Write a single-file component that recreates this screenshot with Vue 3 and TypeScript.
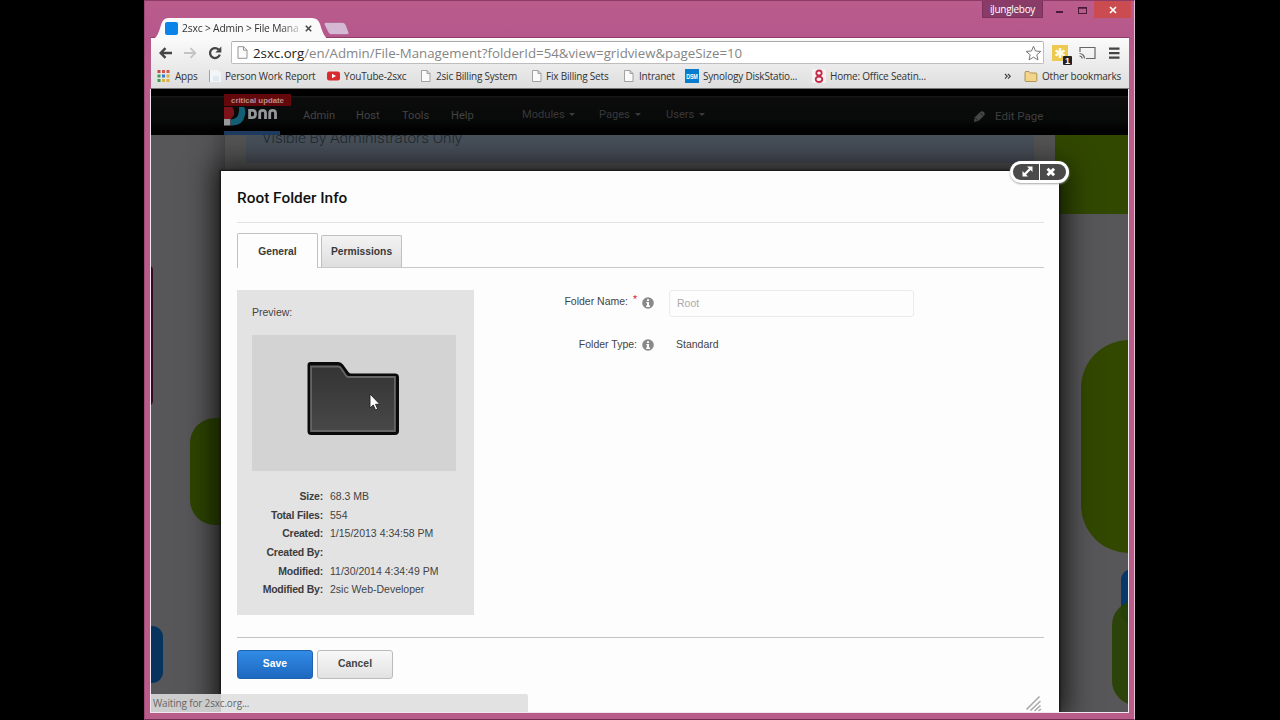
<script setup lang="ts">
interface Bookmark {
  label: string
  icon: 'apps' | 'report' | 'youtube' | 'page' | 'dsm' | 'seat' | 'more' | 'folder'
}

const bookmarks: Bookmark[] = [
  { label: 'Apps', icon: 'apps' },
  { label: 'Person Work Report', icon: 'report' },
  { label: 'YouTube-2sxc', icon: 'youtube' },
  { label: '2sic Billing System', icon: 'page' },
  { label: 'Fix Billing Sets', icon: 'page' },
  { label: 'Intranet', icon: 'page' },
  { label: 'Synology DiskStatio...', icon: 'dsm' },
  { label: 'Home: Office Seatin...', icon: 'seat' },
  { label: '', icon: 'more' },
  { label: 'Other bookmarks', icon: 'folder' },
]

const appColors = ['#c94b45', '#d0594a', '#d0594a', '#3f9a56', '#3b78c9', '#e0b13c', '#3f9a56', '#e0b13c', '#e0b13c']

const details: { label: string; value: string }[] = [
  { label: 'Size:', value: '68.3 MB' },
  { label: 'Total Files:', value: '554' },
  { label: 'Created:', value: '1/15/2013 4:34:58 PM' },
  { label: 'Created By:', value: '' },
  { label: 'Modified:', value: '11/30/2014 4:34:49 PM' },
  { label: 'Modified By:', value: '2sic Web-Developer' },
]
</script>

<template>
  <div class="desktop">
    <div class="window">
      <header class="titlebar">
        <div class="tabs">
          <svg class="tab-shape" width="190" height="22" viewBox="0 0 190 22">
            <path d="M0 22 C5 20 7 14 9 7 Q11 0 16 0 H160 Q166 0 168 6 C170 13 172 19 177 22 Z" fill="#fafafa" />
          </svg>
          <div class="tab-body">
            <span class="favicon"></span>
            <span class="tab-title">2sxc &gt; Admin &gt; File Mana</span>
            <svg width="7" height="7" viewBox="0 0 7 7"><path d="M.8.8 6.2 6.2M6.2.8.8 6.2" stroke="#444" stroke-width="1.5" /></svg>
          </div>
          <svg class="new-tab" width="27" height="13" viewBox="0 0 27 13">
            <path d="M2 .5 H20 Q22 .5 23 3 L26 11 Q26 12.500 24 12.500 H8 Q6 12.500 5 10 L1 2 Z" fill="#d5b8d3" stroke="#a5578c" stroke-width=".6" />
          </svg>
        </div>
        <div class="controls">
          <span class="user">iJungleboy</span>
          <svg class="win-btn" width="51" height="18" viewBox="0 0 51 18">
            <path d="M13 11h7" stroke="#4a1a38" stroke-width="2" />
            <rect x="35.500" y="6.500" width="8" height="6" fill="none" stroke="#4a1a38" />
            <path d="M35 7h9" stroke="#4a1a38" stroke-width="1.500" />
          </svg>
          <span class="close">
            <svg width="8" height="8" viewBox="0 0 8 8"><path d="M1 1 7 7M7 1 1 7" stroke="#fff" stroke-width="1.700" /></svg>
          </span>
        </div>
      </header>

      <div class="toolbar">
        <svg class="nav" width="80" height="26" viewBox="0 0 80 26">
          <path d="M21 13H10M14.500 8.200 9.700 13l4.800 4.800" fill="none" stroke="#444" stroke-width="2.400" />
          <path d="M33 13h11M39.500 8.200l4.800 4.800-4.800 4.800" fill="none" stroke="#c4c4c4" stroke-width="1.800" />
          <path d="M67.500 9.400A5 5 0 1 0 68.800 14.700" fill="none" stroke="#444" stroke-width="2.300" />
          <path d="M70.300 6.500v6h-6z" fill="#444" />
        </svg>
        <div class="omnibox">
          <svg width="11" height="13" viewBox="0 0 11 13"><path d="M1 .7h5.500L10 4.200v8.100H1zM6.500.7v3.500H10" fill="#fcfcfc" stroke="#888" stroke-width=".9" /></svg>
          <span class="url"><b>2sxc.org</b>/en/Admin/File-Management?folderId=54&amp;view=gridview&amp;pageSize=10</span>
          <svg width="17" height="16" viewBox="0 0 17 16"><path d="M8.500 1.200l2 4.800 5.300.4-4 3.400 1.200 5.100-4.500-2.700L4 14.900l1.200-5.100-4-3.400 5.300-.4z" fill="#fff" stroke="#777" stroke-width="1" /></svg>
        </div>
        <svg class="ext" width="78" height="26" viewBox="0 0 78 26">
          <rect x="2" y="5" width="16" height="16" fill="#edc94f" />
          <path d="M10 8v10M5.500 10.500l9 5M14.500 10.500l-9 5" stroke="#fffbe8" stroke-width="2.400" />
          <rect x="13" y="16" width="9" height="9" rx="1" fill="#222" />
          <text x="15" y="24" font-family="Liberation Sans" font-weight="bold" font-size="9" fill="#fff">1</text>
          <path d="M30 12V7.500h15v11H36" fill="none" stroke="#666" stroke-width="1.200" />
          <path d="M29.500 13.500a5 5 0 0 1 5 5M29.500 16a2.500 2.500 0 0 1 2.500 2.500" fill="none" stroke="#666" stroke-width="1.200" />
          <path d="M59 8.700h10.500M59 13.200h10.500M59 17.700h10.500" stroke="#444" stroke-width="2.300" />
        </svg>
      </div>

      <nav class="bookmarks">
        <div v-for="(mark, i) in bookmarks" :key="i" class="bookmark">
          <svg v-if="mark.icon === 'apps'" class="mark-icon" width="14" height="14" viewBox="0 0 14 14">
            <rect v-for="(c, n) in appColors" :key="n" :x="0.5 + (n % 3) * 4.5" :y="1 + Math.floor(n / 3) * 4.5" width="3" height="3" :fill="c" />
          </svg>
          <svg v-else-if="mark.icon === 'report'" class="mark-icon" width="14" height="14" viewBox="0 0 14 14">
            <path d="M2 1h8l3 3v9H2z" fill="#f2f6f8" /><path d="M1.500 1v12" stroke="#85a9bf" />
            <path d="M5 7h6v5H5z" fill="#dfe9ef" />
          </svg>
          <svg v-else-if="mark.icon === 'youtube'" class="mark-icon" width="14" height="14" viewBox="0 0 14 14">
            <rect x="0" y="2.500" width="13" height="9" rx="2.200" fill="#d92a2d" /><path d="M5 4.700l4 2.300-4 2.300z" fill="#fff" />
          </svg>
          <svg v-else-if="mark.icon === 'page'" class="mark-icon" width="14" height="14" viewBox="0 0 14 14">
            <path d="M1.500 1.500H7l3 3v8H1.500zM7 1.500v3h3" fill="#fafafa" stroke="#999" stroke-width=".9" />
          </svg>
          <svg v-else-if="mark.icon === 'dsm'" class="mark-icon" width="14" height="14" viewBox="0 0 14 14">
            <rect width="14" height="14" fill="#087cce" />
            <text x="1.200" y="9.700" font-family="Liberation Sans" font-weight="bold" font-size="6.500" textLength="11.500" lengthAdjust="spacingAndGlyphs" fill="#fff">DSM</text>
          </svg>
          <svg v-else-if="mark.icon === 'seat'" class="mark-icon" width="14" height="14" viewBox="0 0 14 14">
            <rect width="14" height="14" fill="#f6f0f1" />
            <ellipse cx="7" cy="4" rx="2.700" ry="2.500" fill="none" stroke="#c32b4a" stroke-width="1.800" />
            <ellipse cx="7" cy="10.300" rx="3.300" ry="2.700" fill="none" stroke="#c32b4a" stroke-width="1.800" />
          </svg>
          <svg v-else-if="mark.icon === 'more'" class="mark-icon" width="14" height="14" viewBox="0 0 14 14">
            <path d="M1 5l2.200 2.300L1 9.600M4 5l2.200 2.300L4 9.600" fill="none" stroke="#444" stroke-width="1.200" />
          </svg>
          <svg v-else class="mark-icon" width="14" height="14" viewBox="0 0 14 14">
            <path d="M1 11.500V3.500q0-1 1-1h3l1.500 1.500H12q.800 0 .800 1v6.500q0 1-1 1H2q-1 0-1-1z" fill="#f2d588" stroke="#a98a46" stroke-width=".9" />
          </svg>
          <span v-if="mark.label" class="mark-label">{{ mark.label }}</span>
        </div>
      </nav>

      <main class="viewport">
        <div class="paper"></div>
        <div class="notice"><span>Visible By Administrators Only</span></div>
        <i class="blob green-top"></i>
        <i class="blob green-left"></i>
        <i class="blob green-right"></i>
        <i class="blob blue-right"></i>
        <i class="blob green-low"></i>
        <i class="blob blue-left"></i>
        <i class="blob wine"></i>

        <div class="adminbar">
          <div class="brand">
            <span class="critical">critical update</span>
            <svg width="56" height="21" viewBox="0 0 56 21">
              <path d="M0 0H8.500L10 4V8L7 12H0z" fill="#7c121a" />
              <rect y="12" width="6.500" height="6.500" fill="#969a9c" />
              <path d="M15 0h5q2 3 1 8-2 10.500-12.500 10.500H7V12.500q5-.5 7-4 1.800-4 1-8.500z" fill="#125f75" />
              <g fill="none" stroke="#93979a" stroke-width="2.800">
                <path d="M25.600 3.400V10.600h3q2.900 0 2.900-3.600t-2.900-3.600z" />
                <path d="M35.700 12V6.200q0-2.800 2.900-2.800t2.900 2.800V12M45.700 12V6.200q0-2.800 2.900-2.800t2.900 2.800V12" />
              </g>
            </svg>
          </div>
          <span class="menu">Admin</span><span class="menu">Host</span><span class="menu">Tools</span><span class="menu">Help</span>
          <span class="menu sub m1">Modules <i></i></span><span class="menu sub m2">Pages <i></i></span><span class="menu sub m3">Users <i></i></span>
          <span class="edit">
            <svg width="13" height="13" viewBox="0 0 13 13"><path d="M1 12l.6-4.600 5.800-5.600q1.500-1.400 3.400.2t.4 3.400L5.400 11z" fill="#464646" /><path d="M7 2.500l3.300 3.500M2 8l3 2.800" stroke="#151515" stroke-width=".8" /></svg>
            Edit Page
          </span>
        </div>

        <section class="dialog">
          <h1>Root Folder Info</h1>
          <div class="dialog-tabs">
            <button class="dialog-tab active">General</button>
            <button class="dialog-tab">Permissions</button>
          </div>
          <div class="columns">
            <aside class="preview">
              <p>Preview:</p>
              <div class="picture">
                <svg width="95" height="77" viewBox="0 0 94 77" preserveAspectRatio="none">
                  <defs>
                    <linearGradient id="folderFill" x1="0" y1="0" x2="0" y2="1">
                      <stop offset="0" stop-color="#343434" /><stop offset="1" stop-color="#484848" />
                    </linearGradient>
                  </defs>
                  <path d="M1.500 5q0-3 3-3H32q3 0 5 3l5 7q1 1.500 3 1.500H88q4 0 4 4V71q0 4-4 4H5q-3.500 0-3.500-4z" fill="#0a0a0a" />
                  <path d="M5 6.500H32q1.500 0 3 2l4.500 7q1 1.500 3 1.500H88V71H5z" fill="url(#folderFill)" stroke="#666" stroke-width="1.800" />
                </svg>
              </div>
              <dl>
                <template v-for="row in details" :key="row.label">
                  <dt>{{ row.label }}</dt>
                  <dd>{{ row.value }}</dd>
                </template>
              </dl>
            </aside>
            <div class="form">
              <div class="field">
                <label class="name-label">Folder Name: <em>*</em></label>
                <svg class="info" width="12" height="12" viewBox="0 0 12 12"><circle cx="6" cy="6" r="5.800" fill="#898989" /><path d="M5 2.200h2v1.700H5zM4.300 5H7v3.500h1V10H4.100V8.500H5V6.300h-.7z" fill="#fff" /></svg>
                <div class="input">Root</div>
              </div>
              <div class="field second">
                <label>Folder Type:</label>
                <svg class="info" width="12" height="12" viewBox="0 0 12 12"><circle cx="6" cy="6" r="5.800" fill="#898989" /><path d="M5 2.200h2v1.700H5zM4.300 5H7v3.500h1V10H4.100V8.500H5V6.300h-.7z" fill="#fff" /></svg>
                <span class="static">Standard</span>
              </div>
            </div>
          </div>
          <div class="actions">
            <button class="save">Save</button>
            <button class="cancel">Cancel</button>
          </div>
          <svg class="grip" width="18" height="17" viewBox="0 0 18 17"><path d="M1.500 14.500 14.500 1.500M5.500 15.500l10-9.500M9.500 16l6-5.500M13.500 16l2.500-2" stroke="#aaa" stroke-width="1.600" /></svg>
        </section>
        <div class="dialog-controls">
          <svg width="53" height="16" viewBox="0 0 53 16">
            <rect width="53" height="16" rx="8" fill="#4a4a4b" />
            <path d="M26.500 0v16" stroke="#fff" />
            <path d="M14 2.500h5.500V8l-1.900-1.900-4.500 4.500 1.900 1.900H9.500V7l1.900 1.900 4.500-4.500z" fill="#fff" />
            <path d="M34.500 4.700l6.600 6.600M41.100 4.700l-6.600 6.600" stroke="#fff" stroke-width="3" />
          </svg>
        </div>
        <div class="status">Waiting for 2sxc.org...</div>
        <svg class="cursor" width="12" height="19" viewBox="0 0 12 19"><path d="M1 1v14l3.300-3 2.200 5 2.200-1-2.200-4.700h4.300z" fill="#fff" stroke="#222" stroke-width=".9" /></svg>
      </main>
    </div>
  </div>
</template>

<style>
body { margin: 0; background: #000; }
</style>

<style scoped>
* { box-sizing: border-box; }
.desktop { width: 1280px; height: 720px; background: #000; display: flex; overflow: hidden; font-family: "Liberation Sans", Arial, sans-serif; }
.window { width: 991px; height: 720px; margin-left: 144px; padding: 0 6px; background: linear-gradient(#ba5c8c, #b5578b 38px, #b85c89 60px); border-top: 1px solid #8e3a68; border-left: 1px solid #9d4775; border-right: 1px solid #e3bfd3; border-bottom: 1px solid #6f2b50; font-size: 11px; }
.titlebar { height: 37px; display: flex; justify-content: space-between; }
.tabs { display: flex; position: relative; padding-top: 17px; width: 210px; }
.tab-shape { position: absolute; left: 1px; top: 17px; }
.tab-body { position: relative; display: flex; align-items: center; height: 20px; width: 177px; padding-left: 14px; }
.favicon { width: 13px; height: 13px; border-radius: 2px; background: #0a84e8; margin-right: 4px; }
.tab-title { width: 123px; font: 10.3px "Open Sans", sans-serif; letter-spacing: -.18px; color: #333; white-space: nowrap; overflow: hidden; -webkit-mask-image: linear-gradient(90deg, #000 80%, rgba(0,0,0,.25) 95%); mask-image: linear-gradient(90deg, #000 80%, rgba(0,0,0,.25) 95%); }
.new-tab { margin: 4px 0 0 -5px; position: relative; }
.controls { display: flex; align-items: flex-start; margin-right: -3px; }
.user { width: 61px; height: 17px; background: #8a3c68; border: 1px solid #7c305b; border-top: 0; color: #fff; font: 10px/16px "Open Sans", sans-serif; text-align: center; letter-spacing: -.3px; }
.close { width: 37px; height: 17px; background: #cb4c50; display: flex; align-items: center; justify-content: center; }
.toolbar { height: 29px; background: linear-gradient(#fafafa, #eaeaea); border-top: 1px solid #fff; display: flex; align-items: center; box-shadow: 0 -1px #8f3c6d; width: 978px; padding-bottom: 1px; }
.nav { flex: none; }
.omnibox { width: 813px; height: 23px; border: 1px solid #bdbdbd; border-top-color: #aaa; border-radius: 2px; background: #fff; display: flex; align-items: center; padding: 0 1px 0 5px; }
.url { flex: 1; margin-left: 5px; font: 13.25px/20px "Open Sans", sans-serif; color: #858585; white-space: nowrap; }
.url b { font-weight: 400; color: #222; }
.ext { flex: none; margin-left: 6px; }
.bookmarks { height: 22px; width: 978px; background: linear-gradient(#eaeaea, #dedede); border-bottom: 1px solid #777; display: grid; grid-template-columns: 51px 119px 93px 111px 92px 62px 127px 192px 20px 104px; padding: 0 0 3px 6px; align-items: center; }
.bookmark { display: flex; align-items: center; height: 18px; white-space: nowrap; font: 10px/16px "Open Sans", sans-serif; letter-spacing: -.2px; color: #333; }
.mark-icon { flex: none; width: 14px; margin-right: 4px; }
.bookmark:nth-child(4) .mark-icon, .bookmark:nth-child(6) .mark-icon { margin-right: 2px; }
.bookmark:nth-child(5) .mark-icon { margin-right: 1px; }
.bookmark:nth-child(2) .mark-icon, .bookmark:nth-child(3) .mark-icon { margin-right: 3px; }

.viewport { position: relative; height: 624px; width: 979px; margin-left: -1px; border: 1px solid #f3e6ee; border-top: 0; background: #575759; overflow: hidden; }
.paper { position: absolute; left: 74px; top: 0; width: 830px; height: 623px; background: #535353; box-shadow: 0 0 25px #353535; }
.notice { position: absolute; left: 95px; top: 37px; width: 788px; height: 37px; background: linear-gradient(#46525a, #484c57); color: #20262b; font: 300 15.3px/24px Roboto, sans-serif; padding-left: 16px; }
.blob { position: absolute; display: block; }
.green-top { left: 904px; top: 30px; width: 80px; height: 95px; background: #314800; }
.green-left { left: 39px; top: 329px; width: 60px; height: 107px; border-radius: 25px; background: #2d4400; }
.green-right { left: 930px; top: 251px; width: 100px; height: 213px; border-radius: 48px; background: #324800; }
.blue-right { left: 970px; top: 480px; width: 30px; height: 55px; border-radius: 11px; background: #07386a; }
.green-low { left: 961px; top: 512px; width: 60px; height: 104px; border-radius: 24px; background: rgba(40, 66, 0, .9); }
.blue-left { left: -30px; top: 537px; width: 42px; height: 57px; border-radius: 11px; background: #06345e; }
.wine { left: -8px; top: 176px; width: 10px; height: 141px; border-radius: 5px; background: #3a0a22; }
.adminbar { position: absolute; left: 0; top: 0; width: 977px; height: 46px; padding-left: 73px; display: flex; border-top: 1px solid #000; background: linear-gradient(#000 6px, #1a1a1a 6px, #0c0c0c 8px, #080909 30px, #020202 40px); }
.brand { width: 79px; padding-top: 4px; height: 45px; }
.brand svg { display: block; }
.critical { display: block; width: 67px; height: 12px; margin-bottom: 1px; background: #65080c; color: #b3908f; font: bold 7.800px/13px "Liberation Sans", sans-serif; text-align: center; white-space: nowrap; }
.brand::after { content: ""; display: block; width: 56px; height: 4px; background: #1f3b60; margin-top: 3px; }
.menu { width: 53px; padding-top: 18px; font: 11.1px/16px Roboto, sans-serif; color: #444; }
.menu:nth-of-type(2) { width: 46px; }
.menu:nth-of-type(3) { width: 49px; }
.menu:nth-of-type(4) { width: 71px; }
.sub { color: #393939; white-space: nowrap; padding-top: 17px; }
.sub i { display: inline-block; border: 3px solid transparent; border-top-color: #3c3c3c; border-bottom: 0; margin: 0 0 2px 2px; }
.m1.m1 { width: 77px; }
.m2.m2 { width: 67px; }
.m3.m3 { width: 307px; }
.edit { display: flex; align-items: center; gap: 9px; height: 52px; color: #3f3f3f; font: 11.5px/16px Roboto, sans-serif; }

.dialog { position: absolute; left: 70px; top: 82px; width: 838px; height: 541px; background: #fdfdfd; padding: 15px 15px 0 16px; box-shadow: 0 0 2px 1px #111, 0 0 26px 8px rgba(0,0,0,.6); color: #444; }
h1 { margin: 0; height: 37px; border-bottom: 1px solid #e2e2e2; font: 500 15.400px/24px Roboto, sans-serif; color: #111; }
.dialog-tabs { display: flex; align-items: flex-end; height: 45px; border-bottom: 1px solid #c9c9c9; padding-top: 10px; gap: 3px; }
.dialog-tab { width: 81px; height: 32px; border: 1px solid #c0c0c0; border-bottom: 0; border-radius: 2px 2px 0 0; background: linear-gradient(#f3f3f3, #dedede); font: bold 10.3px "Liberation Sans", sans-serif; color: #3a3a3a; padding: 0; }
.dialog-tab.active { height: 35px; margin-bottom: -1px; background: #fdfdfd; padding: 1px 0 0; }
.columns { display: flex; height: 370px; padding-top: 22px; border-bottom: 1px solid #c4c4c4; }
.preview { width: 237px; height: 325px; background: #e3e3e3; padding: 14px 15px 0; }
.preview p { margin: 0 0 14px; line-height: 17px; font-size: 10.500px; }
.picture { width: 204px; height: 136px; background: #d3d3d3; display: flex; padding: 25px 0 0 54px; }
dl { margin: 16px 0 0; display: grid; grid-template-columns: 71px 1fr; column-gap: 7px; grid-auto-rows: 18.7px; font-size: 10.500px; line-height: 19px; white-space: nowrap; }
dt { font-weight: 700; text-align: right; color: #3c3c3c; letter-spacing: -.22px; }
dd { margin: 0; }
.form { width: 560px; }
.field { display: flex; align-items: center; height: 27px; font-size: 10.500px; }
.second { margin-top: 14px; }
.field label { width: 163px; text-align: right; padding-bottom: 2px; color: #444; }
.field .name-label { padding-bottom: 6px; }
em { color: #d0223a; font-style: normal; position: relative; top: -2px; margin-left: 2px; }
.info { margin: 0 0 1px 5px; }
.second .info { margin-bottom: 0; }
.input { width: 245px; height: 27px; margin-left: 15px; border: 1px solid #ebebeb; border-radius: 3px; padding: 0 7px; line-height: 25px; color: #aaa; }
.static { margin: 0 0 1px 22px; }
.actions { display: flex; gap: 4px; padding-top: 12px; }
.actions button { width: 76px; height: 29px; border: 1px solid #bbb; border-radius: 3px; font: bold 10.4px "Liberation Sans", sans-serif; color: #444; background: linear-gradient(#f8f8f8, #e2e2e2); padding: 0 0 2px; }
.actions .save { color: #fff; background: linear-gradient(#318be5, #1d68c0); border-color: #2162ae; }
.grip { position: absolute; right: 16px; bottom: 0; }
.dialog-controls { position: absolute; left: 859px; top: 72px; width: 59px; height: 22px; border-radius: 12px; background: #fff; padding: 3px; box-shadow: 0 1px 2px #aaa; }
.dialog-controls svg { display: block; }
.status { position: absolute; left: 0; bottom: 0; width: 377px; height: 18px; border-top-right-radius: 2px; background: rgba(222,222,222,.88); color: #666; font: 10px/18px "Open Sans", sans-serif; letter-spacing: -.17px; padding-left: 2px; }
.cursor { position: absolute; left: 218px; top: 304px; }
</style>
